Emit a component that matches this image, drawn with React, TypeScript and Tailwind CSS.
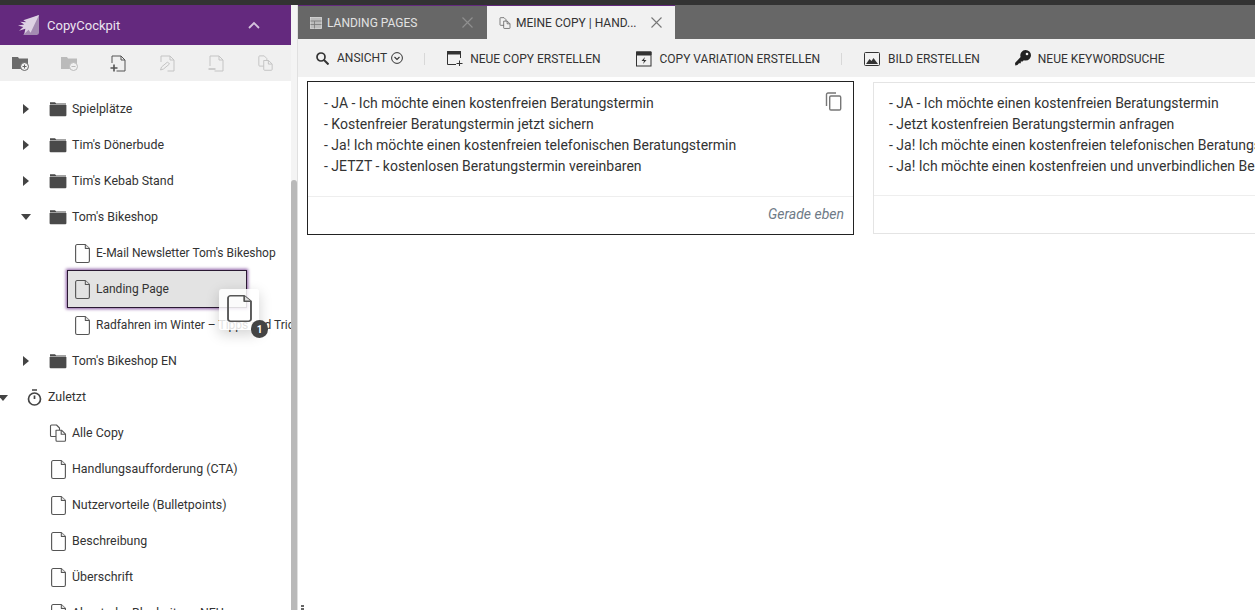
import React from 'react';

const F = "M5.5 2.5h8l4 4v13a1.5 1.5 0 0 1-1.5 1.5H5.5A1.5 1.5 0 0 1 4 19.5v-15.5a1.5 1.5 0 0 1 1.5-1.5z";

function DocIcon({ className = "w-[15px] h-[19px]", color = "#555" }: { className?: string; color?: string }) {
    return (
        <svg className={`shrink-0 ${className}`} viewBox="3.4 1.9 14.7 19.7" preserveAspectRatio="none" fill="none" stroke={color} strokeWidth="1.1" strokeLinejoin="round">
            <path d={F} />
            <path d="M13.5 2.5v4h4" fill="#ddd" strokeWidth="1" />
        </svg>
    );
}

function FolderIcon() {
    return (
        <svg className="w-[18px] h-[16px] shrink-0" viewBox="0 0 18 16" fill="#4a4a4a">
            <path d="M1 1.2h5l1.2 1.2H17v1H1z" />
            <path d="M.6 4h16.8v10.2a1 1 0 0 1-1 1H1.6a1 1 0 0 1-1-1z" />
        </svg>
    );
}

function CopyDocsIcon({ color = "#555", className = "w-[16px] h-[16px]" }: { color?: string; className?: string }) {
    return (
        <svg className={`shrink-0 ${className}`} viewBox="0 0 18 18" fill="none" stroke={color} strokeWidth="1.1" strokeLinejoin="round">
            <path d="M7 12.5H2.5a1 1 0 0 1-1-1V2a1 1 0 0 1 1-1h5l3 3v2" />
            <path d="M7 6.2h5.5l4 4v6a1 1 0 0 1-1 1H8a1 1 0 0 1-1-1z" />
            <path d="M12.2 6.2v4h4" />
        </svg>
    );
}

function Caret({ open, className = "" }: { open?: boolean; className?: string }) {
    return open ? (
        <svg className={`w-[10px] h-[6px] ${className}`} viewBox="0 0 10 6" fill="#444"><path d="M0 0h10L5 6z" /></svg>
    ) : (
        <svg className={`w-[6px] h-[10px] ${className}`} viewBox="0 0 6 10" fill="#444"><path d="M0 0l6 5-6 5z" /></svg>
    );
}

function FolderRow({ label, open }: { label: string; open?: boolean }) {
    return (
        <div className="h-9 flex items-center whitespace-nowrap text-[12.4px]">
            <div className={`w-[49px] flex justify-end ${open ? 'pr-[18px]' : 'pr-[20px]'}`}><Caret open={open} /></div>
            <FolderIcon />
            <span className="ml-[5px]">{label}</span>
        </div>
    );
}

function DocRow({ label, indent }: { label: string; indent?: boolean }) {
    return (
        <div className={`h-9 flex items-center whitespace-nowrap ${indent ? 'pl-[75px] text-[12px]' : 'pl-[51px] text-[12.4px]'}`}>
            <DocIcon />
            <span className="ml-[6px]">{label}</span>
        </div>
    );
}

function ToolBtn({ icon, label, className = "" }: { icon: React.ReactNode; label: string; className?: string }) {
    return (
        <div className={`flex items-center whitespace-nowrap ${className}`}>
            {icon}
            <span>{label}</span>
        </div>
    );
}

function CopyCard({ lines, active, time }: { lines: string[]; active?: boolean; time?: string }) {
    return (
        <div className={`relative shrink-0 w-[547px] bg-white flex flex-col border ${active ? 'h-[154px] border-[#222]' : 'h-[152px] mt-px border-[#e4e4e4]'}`}>
            <div className={`flex-1 text-[14px] leading-[21px] text-[#333] whitespace-nowrap overflow-hidden ${active ? 'pl-4 pt-[11px]' : 'pl-[15px] pt-[10px]'}`}>
                {lines.map(l => <div key={l}>- {l}</div>)}
            </div>
            {active && (
                <svg className="absolute right-[11px] top-[10px] w-[17px] h-[19px]" viewBox="0 0 17 19" fill="none" stroke="#777" strokeWidth="1.4">
                    <path d="M1.5 14V2.5a1.5 1.5 0 0 1 1.5-1.5h8" />
                    <rect x="4.7" y="4" width="11" height="14" rx="1.2" />
                </svg>
            )}
            <div className="h-[38px] shrink-0 border-t border-[#eee] flex items-center justify-end pr-[9px] pb-[2px] text-[14px] italic text-[#6f7b87]">
                {time}
            </div>
        </div>
    );
}

export default function App() {
    return (
        <div className="w-[1255px] h-[610px] overflow-hidden flex flex-col bg-white font-['Roboto',sans-serif]">
            <div className="h-[5px] bg-[#333] shrink-0" />
            <div className="flex-1 flex min-h-0">
                {/* Sidebar */}
                <aside className="w-[291px] shrink-0 flex flex-col relative">
                    <div className="h-10 bg-[#64297e] flex items-center text-white shrink-0">
                        <svg className="ml-[18px] w-[21px] h-[21px] shrink-0" viewBox="0 0 20 20">
                            <path d="M20 0v17a2 2 0 0 1-2 2H5l4-6 1-4-5 1 4-5z" fill="#a48bb2" />
                            <path d="M20 0L5 5l3 2-6-.5 4 2.5-6 1 5 1.5-4 3.5 6-2-1 5 4-4 2 3z" fill="#ded2e4" />
                        </svg>
                        <span className="ml-[8px] pt-[2px] text-[13px] text-[#ece4f0]">CopyCockpit</span>
                        <svg className="ml-auto mr-[31px] w-[12px] h-[8px]" viewBox="0 0 12 8" fill="none" stroke="#d4c2dc" strokeWidth="1.8"><path d="M1 7l5-5 5 5" /></svg>
                    </div>
                    <div className="h-9 bg-[#f0f0f0] shrink-0 flex items-center gap-[32px] pl-[12px]">
                        <svg className="w-[17px] h-[15px] shrink-0" viewBox="0 0 17 15">
                            <path d="M0 1h6l1 1.5h9V13H0z" fill="#6b6b6b" />
                            <circle cx="12.5" cy="10.5" r="4" fill="#f0f0f0" stroke="#666" />
                            <path d="M10.5 10.5h4M12.5 8.5v4" stroke="#666" />
                        </svg>
                        <svg className="w-[17px] h-[15px] shrink-0" viewBox="0 0 17 15">
                            <path d="M0 1h6l1 1.5h9V13H0z" fill="#bbb" />
                            <circle cx="12.5" cy="10.5" r="4" fill="#f0f0f0" stroke="#bbb" />
                            <path d="M10.5 10.5h4" stroke="#bbb" />
                        </svg>
                        <svg className="w-[17px] h-[17px] shrink-0" viewBox="0 0 16 17" fill="none" stroke="#555" strokeWidth="1">
                            <path d="M1.5 8V1h9l4 4v11H6" />
                            <path d="M10.5 1v4h4" />
                            <path d="M0 13h7M3.5 9.5v7" strokeWidth="1.6" />
                        </svg>
                        <svg className="w-[17px] h-[17px] shrink-0" viewBox="0 0 16 17" fill="none" stroke="#c4c4c4" strokeWidth="1">
                            <path d="M1.5 7V1h9l4 4v11H8" />
                            <path d="M10.5 1v4h4" />
                            <path d="M1 15l1-3 6-5 2 2-6 5z" />
                        </svg>
                        <svg className="w-[17px] h-[17px] shrink-0" viewBox="0 0 16 17" fill="none" stroke="#c4c4c4" strokeWidth="1">
                            <path d="M1.5 11V1h9l4 4v11H6" />
                            <path d="M10.5 1v4h4" />
                            <path d="M0 14h7" strokeWidth="1.6" />
                        </svg>
                        <CopyDocsIcon color="#c4c4c4" className="w-[17px] h-[16px]" />
                    </div>
                    <div className="flex-1 min-h-0 overflow-hidden pt-[10px] text-[#333]">
                        <FolderRow label="Spielplätze" />
                        <FolderRow label="Tim's Dönerbude" />
                        <FolderRow label="Tim's Kebab Stand" />
                        <FolderRow label="Tom's Bikeshop" open />
                        <DocRow indent label="E-Mail Newsletter Tom's Bikeshop" />
                        <div className="h-9 flex items-center text-[12px]">
                            <div className="ml-[67px] w-[180px] h-[38px] -my-px flex items-center pl-[7px] bg-[#e3e3e3] border border-[#2a1a33] shadow-[0_0_3px_1px_#8a5aa3]">
                                <DocIcon />
                                <span className="ml-[6px]">Landing Page</span>
                            </div>
                        </div>
                        <DocRow indent label="Radfahren im Winter – Tipps und Tricks" />
                        <FolderRow label="Tom's Bikeshop EN" />
                        <div className="h-9 flex items-center whitespace-nowrap text-[12.4px] pt-px">
                            <Caret open className="ml-[-2px]" />
                            <svg className="ml-[19px] w-[15px] h-[18px]" viewBox="0 0 15 18" fill="none" stroke="#444" strokeWidth="1.7">
                                <circle cx="7.5" cy="10" r="6" />
                                <path d="M5 1h5M7.5 6.5V10" />
                            </svg>
                            <span className="ml-[6px]">Zuletzt</span>
                        </div>
                        <div className="h-9 flex items-center whitespace-nowrap pl-[49px] text-[12.4px]">
                            <CopyDocsIcon className="w-[18px] h-[18px]" />
                            <span className="ml-[5px]">Alle Copy</span>
                        </div>
                        <DocRow label="Handlungsaufforderung (CTA)" />
                        <DocRow label="Nutzervorteile (Bulletpoints)" />
                        <DocRow label="Beschreibung" />
                        <DocRow label="Überschrift" />
                        <DocRow label="Abgetrehn Blaubeiten - NEU" />
                    </div>

                    {/* Drag ghost */}
                    <div className="absolute left-[219px] top-[284px] w-10 h-[41px] rounded-[3px] bg-white/85 shadow-[0_4px_14px_rgba(0,0,0,0.18)] flex items-center justify-center pb-[2px]">
                        <DocIcon className="w-[25px] h-[27px]" />
                        <div className="absolute left-[32px] top-[31px] w-[17px] h-[18px] rounded-full bg-[#444] text-white text-[10px] font-bold flex items-center justify-center">1</div>
                    </div>
                </aside>

                {/* Scrollbar */}
                <div className="w-[6px] shrink-0 bg-[#f4f4f4] flex flex-col justify-end">
                    <div className="h-[430px] bg-[#b9b9b9] rounded-t-[3px]" />
                </div>

                <main className="flex-1 min-w-0 flex flex-col relative border-l border-[#e0e0e0]">
                    <div className="h-[34px] bg-[#676767] shrink-0 flex text-[12px]">
                        <div className="w-[189px] bg-[#676767] border-t border-[#64297e] flex items-center pl-[12px] text-[#e2e2e2]">
                            <svg className="w-[12px] h-[12px]" viewBox="0 0 12 12" fill="#bbb" stroke="#ddd" strokeWidth=".8"><rect x=".5" y=".5" width="11" height="11" /><path d="M.5 4h11M.5 7.5h11M4.5 4v7.5" stroke="#777" /></svg>
                            <span className="ml-[5px]">LANDING PAGES</span>
                            <svg className="ml-auto mr-[14px] w-[11px] h-[11px]" viewBox="0 0 11 11" stroke="#8f8f8f" strokeWidth="1.2"><path d="M.5.5l10 10M10.5.5l-10 10" /></svg>
                        </div>
                        <div className="w-[188px] bg-[#f1f1f1] border-t border-[#64297e] flex items-center pl-[12px] text-[#333]">
                            <CopyDocsIcon className="w-[12px] h-[12px]" />
                            <span className="ml-[5px] whitespace-nowrap">MEINE COPY | HAND...</span>
                            <svg className="ml-auto mr-[13px] w-[11px] h-[11px]" viewBox="0 0 11 11" stroke="#777" strokeWidth="1.1"><path d="M.5.5l10 10M10.5.5l-10 10" /></svg>
                        </div>
                    </div>
                    <div className="h-[38px] bg-[#f1f1f1] shrink-0 flex items-center text-[12px] text-[#333] pl-[18px] pt-[2px]">
                        <svg className="w-[13px] h-[13px] -mt-[2px]" viewBox="0 0 13 13" fill="none" stroke="#333" strokeWidth="1.7"><circle cx="5" cy="5" r="4" /><path d="M8 8l4.5 4.5" strokeWidth="2" /></svg>
                        <span className="ml-[8px] -mt-[2px]">ANSICHT</span>
                        <svg className="ml-[4px] w-[12px] h-[12px] -mt-[2px]" viewBox="0 0 12 12" fill="none" stroke="#333"><circle cx="6" cy="6" r="5.4" /><path d="M3.5 5L6 7.5 8.5 5" strokeWidth="1.1" /></svg>
                        <div className="ml-[21px] w-px h-[12px] bg-[#d8d8d8]" />
                        <ToolBtn className="ml-[22px] gap-[7px]" label="NEUE COPY ERSTELLEN" icon={
                            <svg className="w-[16px] h-[16px] -mt-[2px]" viewBox="0 0 16 16" fill="none" stroke="#333" strokeWidth="1">
                                <path d="M.5 14.5V1.5h13V8M.5 14.5H9" />
                                <path d="M.5 1.5h13v2.5H.5z" fill="#333" />
                                <path d="M9.5 13.5h6M12.5 10.5v5.5" />
                            </svg>
                        } />
                        <ToolBtn className="ml-[35px] gap-[8px]" label="COPY VARIATION ERSTELLEN" icon={
                            <svg className="w-[16px] h-[16px]" viewBox="0 0 16 16" fill="none" stroke="#333" strokeWidth="1">
                                <rect x=".5" y="1" width="14.5" height="14" />
                                <path d="M.5 1h14.5v3H.5z" fill="#333" />
                                <path d="M9 6L5.5 10h2.5L7 13l3.5-4H8z" fill="#333" stroke="none" />
                            </svg>
                        } />
                        <div className="ml-[21px] w-px h-[12px] bg-[#d8d8d8]" />
                        <ToolBtn className="ml-[22px] gap-[8px]" label="BILD ERSTELLEN" icon={
                            <svg className="w-[16px] h-[14px]" viewBox="0 0 16 14" fill="none" stroke="#333" strokeWidth="1">
                                <rect x=".5" y=".5" width="15" height="13" rx="1" />
                                <path d="M2 12l3.5-5 2 2 2-3 4.5 6z" fill="#333" stroke="none" />
                            </svg>
                        } />
                        <ToolBtn className="ml-[35px] gap-[7px]" label="NEUE KEYWORDSUCHE" icon={
                            <svg className="w-[16px] h-[16px] -mt-[2px]" viewBox="0 0 16 16" fill="#222">
                                <path d="M10.7 0a5.3 5.3 0 0 1 0 10.6c-.7 0-1.3-.1-1.9-.4L7.6 11.4H5.8v1.8H4l-1.6 1.9-2.1.3L0 13l5.6-6a5.3 5.3 0 0 1 5.1-7z" />
                                <circle cx="12" cy="4" r="1.3" fill="#f1f1f1" />
                            </svg>
                        } />
                    </div>
                    <div className="flex-1 min-h-0 overflow-hidden flex items-start gap-[19px] pl-[9px] pt-[4px]">
                        <CopyCard active time="Gerade eben" lines={[
                            "JA - Ich möchte einen kostenfreien Beratungstermin",
                            "Kostenfreier Beratungstermin jetzt sichern",
                            "Ja! Ich möchte einen kostenfreien telefonischen Beratungstermin",
                            "JETZT - kostenlosen Beratungstermin vereinbaren",
                        ]} />
                        <CopyCard lines={[
                            "JA - Ich möchte einen kostenfreien Beratungstermin",
                            "Jetzt kostenfreien Beratungstermin anfragen",
                            "Ja! Ich möchte einen kostenfreien telefonischen Beratungstermin",
                            "Ja! Ich möchte einen kostenfreien und unverbindlichen Beratungstermin",
                        ]} />
                    </div>
                    <div className="absolute left-[3px] bottom-0 flex flex-col gap-[1px]">
                        <div className="w-[3px] h-[2px] bg-[#666]" />
                        <div className="w-[3px] h-[2px] bg-[#666]" />
                    </div>
                </main>
            </div>
        </div>
    );
}
